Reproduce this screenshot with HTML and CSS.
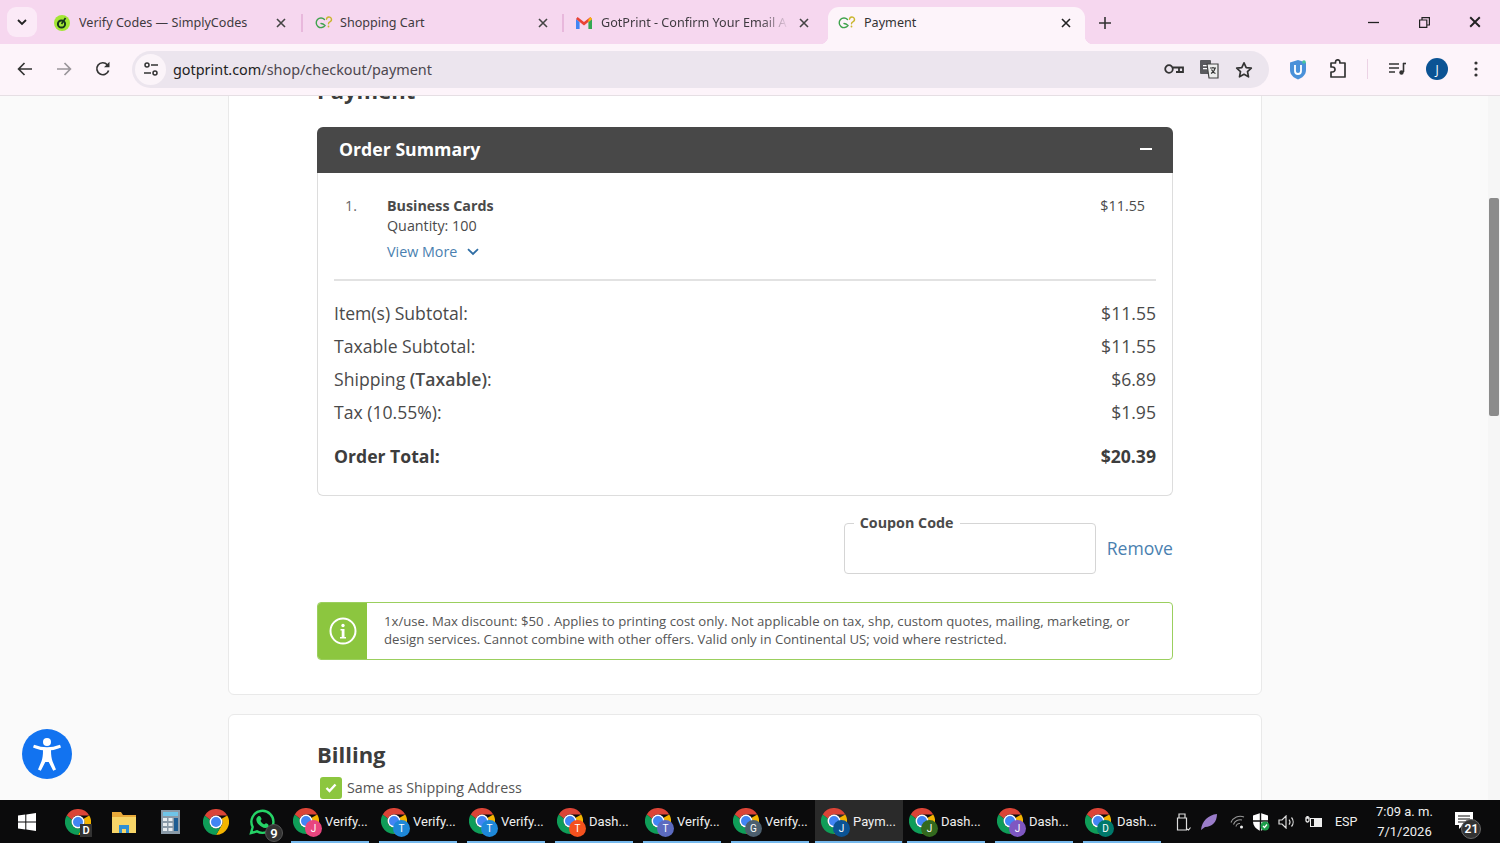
FILE: index.html
```html
<!DOCTYPE html>
<html lang="en">
<head>
<meta charset="utf-8">
<title>Payment</title>
<link rel="stylesheet" href="styles.css">
</head>
<body>
<svg class="defs" width="0" height="0" aria-hidden="true">
  <symbol id="chrome" viewBox="0 0 24 24">
    <path fill="#db4437" d="M1.6 6A12 12 0 0 1 22.4 6H12a6 6 0 0 0-5.6 3.9z"/>
    <path fill="#f4b400" d="M22.4 6A12 12 0 0 1 12 24l5.2-9a6 6 0 0 0 0-6z" />
    <path fill="#0f9d58" d="M1.6 6A12 12 0 0 0 12 24l5.2-9a6 6 0 0 1-10.8-5.1z"/>
    <circle cx="12" cy="12" r="6" fill="#fff"/>
    <circle cx="12" cy="12" r="4.6" fill="#4285f4"/>
  </symbol>
  <symbol id="gp" viewBox="0 0 18 14">
    <path fill="none" stroke="#3fa34d" stroke-width="1.4" stroke-linecap="round" d="M9.500 3.500A4.800 4.800 0 1 0 10 9.500C8.500 8 7.500 7.500 6 7.500"/>
    <path fill="none" stroke="#c9b52d" stroke-width="1.4" stroke-linecap="round" d="M11.500 3.200a2.500 2.500 0 1 1 3.400 2.600c-1 .5-1.400 1-1.400 2"/>
    <circle cx="13.500" cy="10.500" r=".9" fill="#c9b52d"/>
  </symbol>
  <symbol id="x" viewBox="0 0 10 10">
    <path fill="none" stroke="currentColor" stroke-width="1.6" d="M1 1l8 8M9 1l-8 8"/>
  </symbol>
</svg>

<header class="tabstrip">
  <div class="tab-search"><svg width="10" height="7" viewBox="0 0 10 7"><path fill="none" stroke="#222" stroke-width="1.8" d="M1 1l4 4 4-4"/></svg></div>
  <div class="tab tab-first">
    <svg class="favicon" width="16" height="16" viewBox="0 0 16 16"><circle cx="8" cy="8" r="8" fill="#a3e635"/><circle cx="7.5" cy="9" r="3.6" fill="none" stroke="#14361b" stroke-width="2"/><path fill="none" stroke="#14361b" stroke-width="1.6" d="M7.5 9l4-6"/></svg>
    <span class="tab-title">Verify Codes — SimplyCodes</span>
    <svg class="tab-x" width="10" height="10"><use href="#x"/></svg>
  </div>
  <i class="tab-sep"></i>
  <div class="tab tab-second">
    <svg class="favicon" width="18" height="14"><use href="#gp"/></svg>
    <span class="tab-title">Shopping Cart</span>
    <svg class="tab-x" width="10" height="10"><use href="#x"/></svg>
  </div>
  <i class="tab-sep"></i>
  <div class="tab">
    <svg class="favicon" width="16" height="12" viewBox="0 0 16 12"><path fill="#4285f4" d="M0 2v10h3.6V5z"/><path fill="#34a853" d="M16 2v10h-3.6V5z"/><path fill="#ea4335" d="M1.6 0 8 5l6.4-5L16 2l-8 6.4L0 2z"/><path fill="#fbbc04" d="M12.4 2.8 14.4 0 16 2l-3.600 3z"/></svg>
    <span class="tab-title tab-fade">GotPrint - Confirm Your Email A</span>
    <svg class="tab-x" width="10" height="10"><use href="#x"/></svg>
  </div>
  <div class="tab tab-active">
    <svg class="favicon" width="18" height="14"><use href="#gp"/></svg>
    <span class="tab-title">Payment</span>
    <svg class="tab-x" width="10" height="10"><use href="#x"/></svg>
  </div>
  <svg class="tab-new" width="12" height="12" viewBox="0 0 12 12"><path stroke="#333" stroke-width="1.6" d="M6 0v12M0 6h12"/></svg>
  <div class="win-controls">
    <svg width="11" height="11" viewBox="0 0 11 11"><path stroke="#222" stroke-width="1.3" d="M0 5.5h11"/></svg>
    <svg width="11" height="11" viewBox="0 0 11 11"><path fill="none" stroke="#222" stroke-width="1.2" d="M.6 3h7.2v7.4H.6zM3 3V.7h7.4V8H7.8"/></svg>
    <svg width="12" height="12"><use href="#x"/></svg>
  </div>
</header>

<nav class="toolbar">
  <svg class="tool" width="16" height="14" viewBox="0 0 16 14"><path fill="none" stroke="#333" stroke-width="1.7" d="M15 7H2M7.5 1 1.6 7l5.900 6"/></svg>
  <svg class="tool tool-fwd" width="16" height="14" viewBox="0 0 16 14"><path fill="none" stroke="#9a959a" stroke-width="1.7" d="M1 7h13M8.500 1l5.900 6-5.900 6"/></svg>
  <svg class="tool tool-reload" width="16" height="16" viewBox="0 0 16 16"><path fill="none" stroke="#333" stroke-width="1.7" d="M13.600 9.500A6 6 0 1 1 12.300 3.700"/><path fill="#333" d="M14.500 .8v5.500H9z"/></svg>
  <div class="omnibox">
    <div class="site-info"><svg width="16" height="16" viewBox="0 0 16 16"><g fill="none" stroke="#333" stroke-width="1.500"><circle cx="4" cy="4" r="2"/><circle cx="12" cy="12" r="2"/><path d="M8 4h7M1 12h7"/></g></svg></div>
    <span class="url">gotprint.com<span class="url-path">/shop/checkout/payment</span></span>
    <div class="omni-icons">
      <svg width="20" height="12" viewBox="0 0 20 12"><g fill="none" stroke="#333" stroke-width="1.800"><circle cx="5" cy="6" r="3.800"/><path d="M9 4.500h10v4.500h-7"/><path d="M15 5v3"/></g></svg>
      <svg width="19" height="19" viewBox="0 0 19 19"><rect x="0" y="0" width="11" height="14" rx="1" fill="#5a5a5e"/><path fill="#fff" d="M3 5h5v1.200H3zM3 8h5v1.200H3z"/><path fill="#eee" stroke="#444" stroke-width="1.200" d="M7 4h11v14H9z"/><path fill="none" stroke="#333" stroke-width="1.200" d="M10 8h6M13 7v1M15 8c-.5 3-2 4.500-4 5.500M11.500 9.500c1 2 2.500 3.500 4 4"/></svg>
      <svg width="18" height="17" viewBox="0 0 18 17"><path fill="none" stroke="#333" stroke-width="1.700" stroke-linejoin="round" d="m9 1.800 2.200 4.800 5.100.6-3.800 3.500 1 5.100L9 13.300l-4.500 2.500 1-5.100L1.700 7.200l5.100-.6z"/></svg>
    </div>
  </div>
  <div class="ext-icons">
    <svg width="18" height="21" viewBox="0 0 18 21"><path fill="#4a90d9" d="M1 3.500 9 1l8 2.500V11c0 5-4 8-8 9.500C5 19 1 16 1 11z"/><path fill="none" stroke="#fff" stroke-width="1.800" d="M6 6v6a3 3 0 0 0 6 0V6"/><circle cx="15" cy="3" r="1.800" fill="#43c59e"/></svg>
    <svg width="18" height="20" viewBox="0 0 18 20"><path fill="none" stroke="#333" stroke-width="1.700" stroke-linejoin="round" d="M2 4h4.500V3a2.200 2.200 0 0 1 4.400 0v1H16v14H2v-5h1.500a2.500 2.500 0 0 0 0-5H2z"/></svg>
    <i class="ext-sep"></i>
    <svg width="17" height="14" viewBox="0 0 17 14"><path stroke="#333" stroke-width="1.600" fill="none" d="M0 2h10M0 6h10M0 10h6M14.500 1v9"/><circle cx="12.500" cy="10.500" r="2.200" fill="#333"/><path stroke="#333" stroke-width="1.600" d="M14 1.500h3"/></svg>
    <span class="avatar">J</span>
    <svg class="kebab" width="4" height="16" viewBox="0 0 4 16"><g fill="#333"><circle cx="2" cy="2" r="1.600"/><circle cx="2" cy="8" r="1.600"/><circle cx="2" cy="14" r="1.600"/></g></svg>
  </div>
</nav>

<div class="viewport">
  <main class="page">
    <section class="card card-payment">
      <h1 class="heading">Payment</h1>
      <div class="summary">
        <div class="summary-head">
          <h2>Order Summary</h2>
          <span class="collapse"></span>
        </div>
        <div class="summary-body">
          <div class="item">
            <span class="item-no">1.</span>
            <div class="item-info">
              <strong>Business Cards</strong>
              <span>Quantity: 100</span>
              <a class="view-more">View More
                <svg width="12" height="8" viewBox="0 0 12 8"><path fill="none" stroke="#2f6ea5" stroke-width="1.800" d="M1 1.200 6 6l5-4.800"/></svg>
              </a>
            </div>
            <span class="item-price">$11.55</span>
          </div>
          <div class="totals">
            <div class="total-row"><span>Item(s) Subtotal:</span><span>$11.55</span></div>
            <div class="total-row"><span>Taxable Subtotal:</span><span>$11.55</span></div>
            <div class="total-row"><span>Shipping <b class="medium">(Taxable)</b>:</span><span>$6.89</span></div>
            <div class="total-row"><span>Tax (10.55%):</span><span>$1.95</span></div>
            <div class="total-row grand"><span>Order Total:</span><span>$20.39</span></div>
          </div>
        </div>
      </div>
      <div class="coupon-row">
        <fieldset class="coupon"><legend>Coupon Code</legend></fieldset>
        <a class="remove">Remove</a>
      </div>
      <div class="notice">
        <div class="notice-icon">
          <svg width="28" height="28" viewBox="0 0 28 28"><circle cx="14" cy="14" r="12.500" fill="none" stroke="#fff" stroke-width="2"/><circle cx="14" cy="8.500" r="1.700" fill="#fff"/><path fill="#fff" d="M11.500 12h4v8h1.500v1.600h-6V20h1.700v-6.400h-1.200z"/></svg>
        </div>
        <p>1x/use. Max discount: $50 . Applies to printing cost only. Not applicable on tax, shp, custom quotes, mailing, marketing, or design services. Cannot combine with other offers. Valid only in Continental US; void where restricted.</p>
      </div>
    </section>
    <section class="card card-billing">
      <h1 class="heading">Billing</h1>
      <label class="same">
        <span class="check"><svg width="12" height="10" viewBox="0 0 12 10"><path fill="none" stroke="#fff" stroke-width="2.400" d="m1.500 5 3 3 6-6.500"/></svg></span>
        <span>Same as Shipping Address</span>
      </label>
    </section>
  </main>
  <div class="scrollbar"><div class="thumb"></div></div>
  <div class="a11y">
    <svg width="34" height="38" viewBox="0 0 34 38"><g fill="#fff"><circle cx="17" cy="7" r="4"/><path d="M3 12.500l1-2.700c5 1.700 8.500 2.500 13 2.500s8-.8 13-2.500l1 2.700c-3.600 1.500-6.600 2.400-10 2.800 0 5 .5 8 1.500 11l3.500 8.200-2.800 1.200L18.700 27h-3.400l-4.500 8.700L8 34.500l3.500-8.200c1-3 1.500-6 1.500-11-3.400-.4-6.400-1.300-10-2.800z"/></g></svg>
  </div>
</div>

<footer class="taskbar">
  <svg class="win-logo" width="18" height="18" viewBox="0 0 18 18"><path fill="#fff" d="M0 2.600 7.300 1.600v7H0zM8.300 1.400 18 0v8.600H8.300zM0 9.600h7.300v7L0 15.500zM8.300 9.600H18V18l-9.700-1.400z"/></svg>
  <div class="pin">
    <svg width="26" height="26"><use href="#chrome"/></svg>
    <span class="badge badge-square">D</span>
  </div>
  <div class="pin">
    <svg width="24" height="22" viewBox="0 0 24 22"><path fill="#e8a93a" d="M0 1h9l2 3h13v18H0z"/><path fill="#f7d568" d="M0 6h24v16H0z"/><path fill="#2d8fd6" d="M7 14h10v8h-3v-4h-4v4H7z"/></svg>
  </div>
  <div class="pin">
    <svg width="19" height="24" viewBox="0 0 19 24"><rect width="19" height="24" fill="#8a9aa8"/><rect x="2" y="2" width="15" height="4" fill="#6fc4e8"/><g fill="#e8edf1"><rect x="2" y="8" width="4" height="3"/><rect x="7.500" y="8" width="4" height="3"/><rect x="2" y="13" width="4" height="3"/><rect x="7.500" y="13" width="4" height="3"/><rect x="2" y="18" width="4" height="3"/><rect x="7.500" y="18" width="4" height="3"/></g><rect x="13" y="8" width="4" height="13" fill="#1d5c93"/></svg>
  </div>
  <div class="pin">
    <svg width="26" height="26"><use href="#chrome"/></svg>
  </div>
  <div class="pin">
    <svg width="28" height="28" viewBox="0 0 28 28"><path fill="none" stroke="#25d366" stroke-width="2.400" d="M3 25l1.700-6A11 11 0 1 1 9 23.400z"/><path fill="#25d366" d="M10 8.500c2-1.500 3 1 3.500 2.300.3 1-1.300 1.500-.8 2.500.8 1.500 1.800 2.300 3.300 3 .9.300 1.200-1.300 2.200-1 1.300.6 3.300 1.500 2 3.500-2.400 2.500-7 .7-10-2.800-2.300-2.800-2.500-6 -.2-7.500z"/></svg>
    <span class="badge badge-num">9</span>
  </div>
  <div class="tasks">
    <div class="task"><span class="task-icon"><svg width="26" height="26"><use href="#chrome"/></svg><b class="profile p-pink">J</b></span><span class="task-label">Verify...</span></div>
    <div class="task"><span class="task-icon"><svg width="26" height="26"><use href="#chrome"/></svg><b class="profile p-blue">T</b></span><span class="task-label">Verify...</span></div>
    <div class="task"><span class="task-icon"><svg width="26" height="26"><use href="#chrome"/></svg><b class="profile p-blue">T</b></span><span class="task-label">Verify...</span></div>
    <div class="task"><span class="task-icon"><svg width="26" height="26"><use href="#chrome"/></svg><b class="profile p-orange">T</b></span><span class="task-label">Dash...</span></div>
    <div class="task"><span class="task-icon"><svg width="26" height="26"><use href="#chrome"/></svg><b class="profile p-indigo">T</b></span><span class="task-label">Verify...</span></div>
    <div class="task"><span class="task-icon"><svg width="26" height="26"><use href="#chrome"/></svg><b class="profile p-slate">G</b></span><span class="task-label">Verify...</span></div>
    <div class="task task-active"><span class="task-icon"><svg width="26" height="26"><use href="#chrome"/></svg><b class="profile p-navy">J</b></span><span class="task-label">Paym...</span></div>
    <div class="task"><span class="task-icon"><svg width="26" height="26"><use href="#chrome"/></svg><b class="profile p-green">J</b></span><span class="task-label">Dash...</span></div>
    <div class="task"><span class="task-icon"><svg width="26" height="26"><use href="#chrome"/></svg><b class="profile p-purple">J</b></span><span class="task-label">Dash...</span></div>
    <div class="task"><span class="task-icon"><svg width="26" height="26"><use href="#chrome"/></svg><b class="profile p-teal">D</b></span><span class="task-label">Dash...</span></div>
  </div>
  <div class="tray">
    <svg width="15" height="18" viewBox="0 0 15 18"><path fill="none" stroke="#ddd" stroke-width="1.200" d="M3 1h6v4H3zM1.500 5h9v12h-9zM11 16l1.500 1 2-2.500"/></svg>
    <svg width="18" height="18" viewBox="0 0 18 18"><path fill="#9a7cc9" d="M1 17C2 8 8 2 17 1c0 8-5 13-12 13z"/></svg>
    <svg class="tray-wifi" width="16" height="14" viewBox="0 0 16 14"><g fill="none" stroke="#999" stroke-width="1.100"><path d="M1 7.500A10 10 0 0 1 14 2"/><path d="M3.500 9.500A7 7 0 0 1 12 5"/><path d="M6 11.500A3.500 3.500 0 0 1 10 8.500"/></g><circle cx="11.500" cy="12" r="1.500" fill="#eee"/></svg>
    <svg class="tray-shield" width="18" height="18" viewBox="0 0 18 18"><path fill="#fff" d="M8.500 0 16 2.500V8c0 5-3 8-7.500 10C4 16 1 13 1 8V2.500z"/><path stroke="#111" stroke-width="1.400" d="M8.500 0v18M1 8h15"/><circle cx="13" cy="13" r="4.500" fill="#1d9e4a"/><path fill="none" stroke="#fff" stroke-width="1.300" d="m11 13 1.500 1.500 2.500-3"/></svg>
    <svg width="18" height="14" viewBox="0 0 18 14"><path fill="none" stroke="#ddd" stroke-width="1.200" d="M1 5v4h3l4 4V1L4 5zM11 4.500a4 4 0 0 1 0 5M13.500 2.500a7 7 0 0 1 0 9"/></svg>
    <svg width="18" height="14" viewBox="0 0 18 14"><rect x="5" y="3" width="12" height="9" fill="#eee"/><rect x="6" y="4" width="3" height="7" fill="#111"/><path fill="none" stroke="#eee" stroke-width="1.300" d="M1 3h3v2.500a1.500 1.500 0 0 1-3 0zM2 1v2M3 1v2"/></svg>
    <span class="tray-lang">ESP</span>
    <div class="clock"><span>7:09 a. m.</span><span>7/1/2026</span></div>
    <div class="notif">
      <svg width="18" height="18" viewBox="0 0 18 18"><path fill="#fff" d="M0 0h18v13H8l-4 4v-4H0z"/><path stroke="#111" stroke-width="1.200" d="M3 4h12M3 7h12M3 10h8"/></svg>
      <span class="badge badge-notif">21</span>
    </div>
  </div>
</footer>
</body>
</html>
```

FILE: styles.css
```css
* { box-sizing: border-box; }
html, body { margin: 0; height: 100%; }
body {
  width: 1500px;
  height: 843px;
  overflow: hidden;
  display: flex;
  flex-direction: column;
  font-family: "Open Sans", sans-serif;
  color: #4a4a4a;
  background: #fafafa;
}
.defs { position: absolute; }

/* Tab strip */
.tabstrip {
  height: 44px;
  flex: none;
  background: #f6d7ef;
  display: flex;
  align-items: flex-end;
  padding-left: 7px;
  font-family: "Noto Sans", sans-serif;
  font-size: 12.6px;
  color: #3f3a40;
}
.tab-search {
  width: 30px;
  height: 30px;
  margin: 0 0 7px;
  border-radius: 9px;
  background: #fbeaf7;
  display: flex;
  align-items: center;
  justify-content: center;
}
.tab {
  width: 260px;
  height: 37px;
  display: flex;
  align-items: center;
  padding: 0 15px 6px 12px;
  flex: none;
}
.tab-first { width: 264px; padding-left: 17px; padding-right: 15px; }
.tab-second { width: 259px; padding-right: 14px; }
.tab-second .favicon { margin-right: 7px; }
.favicon { flex: none; margin-right: 9px; }
.tab-title { flex: 1; white-space: nowrap; overflow: hidden; }
.tab-fade {
  -webkit-mask-image: linear-gradient(90deg, #000 85%, transparent);
  mask-image: linear-gradient(90deg, #000 85%, transparent);
}
.tab-x { flex: none; margin-left: 10px; color: #444; }
.tab-sep {
  width: 2px;
  height: 18px;
  background: #e8b8dc;
  margin-bottom: 12px;
  flex: none;
}
.tab-active {
  width: 257px;
  margin-left: 4px;
  background: #fdf4fa;
  border-radius: 11px 11px 0 0;
  padding-left: 10px;
  padding-right: 14px;
  color: #333;
  position: relative;
}
.tab-active .favicon { margin-right: 8px; }
.tab-active::before,
.tab-active::after {
  content: "";
  position: absolute;
  bottom: 0;
  width: 8px;
  height: 8px;
}
.tab-active::before {
  left: -8px;
  background: radial-gradient(circle at 0 0, transparent 8px, #fdf4fa 8.5px);
}
.tab-active::after {
  right: -8px;
  background: radial-gradient(circle at 100% 0, transparent 8px, #fdf4fa 8.5px);
}
.tab-active .tab-x { color: #222; }
.tab-new { margin: 0 0 15px 14px; flex: none; }
.win-controls {
  margin-left: auto;
  width: 152px;
  display: flex;
  align-items: center;
  justify-content: space-between;
  padding: 0 19px 0 20px;
  height: 44px;
  color: #222;
}

/* Toolbar */
.toolbar {
  height: 52px;
  flex: none;
  background: #fdf4fa;
  border-bottom: 1px solid #e6dfe4;
  display: flex;
  align-items: center;
  padding: 0 0 1px 17px;
}
.tool { flex: none; }
.tool-fwd { margin-left: 23px; }
.tool-reload { margin-left: 23px; }
.omnibox {
  width: 1137px;
  height: 37px;
  margin-left: 21px;
  border-radius: 19px;
  background: #ece5ee;
  display: flex;
  align-items: center;
  padding-left: 3px;
}
.site-info {
  width: 31px;
  height: 31px;
  border-radius: 50%;
  background: #fbf4f9;
  display: flex;
  align-items: center;
  justify-content: center;
}
.url { margin-left: 7px; font-family: "Noto Sans", sans-serif; font-size: 14.4px; color: #222; }
.url-path { color: #4c474e; }
.omni-icons {
  margin-left: auto;
  display: flex;
  align-items: center;
  gap: 16px;
  padding-right: 16px;
}
.ext-icons {
  display: flex;
  align-items: center;
  margin-left: 20px;
  flex: 1;
  gap: 22px;
}
.ext-sep { width: 1px; height: 20px; background: #ecd3e5; margin: 0 -1px 0 -2px; }
.avatar {
  width: 22px;
  height: 22px;
  border-radius: 50%;
  background: #0b5394;
  color: #fff;
  font-size: 12px;
  display: flex;
  align-items: center;
  justify-content: center;
  margin-left: -2px;
}
.kebab { margin-left: 4px; }

/* Page */
.viewport {
  flex: 1;
  min-height: 0;
  position: relative;
  display: flex;
  overflow: hidden;
  background: #fafafa;
}
.page {
  flex: 1;
  padding-left: 228px;
  margin-top: -73px;
}
.scrollbar {
  width: 12px;
  flex: none;
  background: #f6f6f6;
  padding-top: 102px;
}
.thumb { height: 218px; background: #8b8b8b; border-radius: 2px; margin: 0 1px; }
.card {
  width: 1034px;
  background: #fff;
  border: 1px solid #e9e9e9;
  border-radius: 6px;
  padding: 0 88px;
}
.card-payment { height: 672px; padding-top: 51px; }
.card-billing { margin-top: 19px; padding-top: 24px; height: 200px; }
.heading {
  margin: 0;
  font-size: 22px;
  line-height: 30px;
  font-weight: 700;
  color: #3d3d3d;
}
.summary { margin-top: 22px; }
.summary-head {
  height: 46px;
  background: #484848;
  border-radius: 6px 6px 0 0;
  color: #fff;
  display: flex;
  align-items: center;
  justify-content: space-between;
  padding: 0 21px 2px 22px;
}
.summary-head h2 { margin: 0; font-size: 17.7px; font-weight: 700; }
.collapse { width: 12px; height: 2px; background: #fff; }
.summary-body {
  height: 323px;
  border: 1px solid #ddd;
  border-top: 0;
  border-radius: 0 0 6px 6px;
  padding: 0 16px;
}
.item {
  height: 108px;
  border-bottom: 2px solid #e2e2e2;
  display: flex;
  padding: 23px 11px 0 11px;
  font-size: 14.3px;
  line-height: 20px;
}
.item-no { width: 42px; color: #666; flex: none; }
.item-info { flex: 1; display: flex; flex-direction: column; }
.view-more {
  margin-top: 6px;
  color: #4a7fb0;
  display: flex;
  align-items: center;
  gap: 10px;
}
.totals { padding-top: 15px; }
.total-row {
  height: 33px;
  display: flex;
  align-items: center;
  justify-content: space-between;
  font-size: 17.6px;
}
.medium { font-weight: 600; }
.grand { margin-top: 11px; font-weight: 700; color: #3d3d3d; height: 34px; }
.coupon-row {
  display: flex;
  justify-content: flex-end;
  align-items: flex-end;
  gap: 11px;
  margin-top: 19px;
}
.coupon {
  width: 252px;
  height: 59px;
  margin: 0;
  padding: 0 9px;
  border: 1px solid #d5d5d5;
  border-radius: 4px;
}
.coupon legend {
  padding: 0 6px;
  font-size: 14.3px;
  line-height: 16px;
  font-weight: 700;
  color: #4a4a4a;
}
.remove { font-size: 17.6px; line-height: 52px; color: #4a7fb0; }
.notice {
  margin-top: 28px;
  height: 58px;
  border: 1px solid #9bcf5e;
  border-radius: 4px;
  display: flex;
  overflow: hidden;
}
.notice-icon {
  width: 49px;
  flex: none;
  background: #8cc63f;
  display: flex;
  align-items: center;
  justify-content: center;
}
.notice p {
  margin: 0;
  align-self: center;
  padding: 0 30px 2px 17px;
  font-size: 13.18px;
  line-height: 18px;
  color: #555;
}
.same {
  display: flex;
  align-items: flex-start;
  gap: 5px;
  margin: 8px 0 0 3px;
  font-size: 14.3px;
  line-height: 22px;
  color: #555;
}
.check {
  width: 22px;
  height: 22px;
  border-radius: 3px;
  background: #8cc63f;
  display: flex;
  align-items: center;
  justify-content: center;
}
.a11y {
  position: absolute;
  left: 22px;
  top: 633px;
  width: 50px;
  height: 50px;
  border-radius: 50%;
  background: #1273f0;
  display: flex;
  align-items: center;
  justify-content: center;
}

/* Taskbar */
.taskbar {
  height: 43px;
  flex: none;
  background: #0b0b0c;
  display: flex;
  align-items: center;
  color: #f0f0f0;
  font-family: Roboto, sans-serif;
  font-size: 13px;
}
.win-logo { margin-left: 18px; margin-right: 19px; flex: none; }
.pin {
  width: 46px;
  height: 43px;
  flex: none;
  position: relative;
  display: flex;
  align-items: center;
  justify-content: center;
}
.badge {
  position: absolute;
  color: #fff;
  font-size: 11px;
  font-weight: 600;
  display: flex;
  align-items: center;
  justify-content: center;
}
.badge-square { right: 9px; bottom: 6px; width: 12px; height: 13px; background: #333; }
.badge-num {
  right: 2px; bottom: 1px; width: 18px; height: 18px;
  border-radius: 50%; background: #333; border: 1px solid #555; font-size: 13px;
}
.tasks { display: flex; flex: none; margin-left: 2px; }
.task {
  width: 88px;
  height: 43px;
  flex: none;
  display: flex;
  align-items: center;
  padding-left: 6px;
  position: relative;
  gap: 6px;
}
.task::after {
  content: "";
  position: absolute;
  left: 4px;
  right: 6px;
  bottom: 0;
  height: 2px;
  background: #76b9ed;
}
.task-active { background: #2a2a2a; }
.task-active::after { left: 0; right: 1px; }
.task-icon { position: relative; width: 26px; height: 26px; flex: none; top: -1px; }
.task-icon svg { display: block; }
.profile {
  position: absolute;
  right: -3px;
  bottom: -3px;
  width: 17px;
  height: 17px;
  border-radius: 50%;
  color: #fff;
  font-size: 10px;
  font-weight: 400;
  display: flex;
  align-items: center;
  justify-content: center;
}
.task-label { font-size: 13px; white-space: nowrap; margin-top: -1px; }
.p-pink { background: #e8457e; }
.p-blue { background: #1e88d8; }
.p-orange { background: #f4511e; }
.p-indigo { background: #5c6bc0; }
.p-slate { background: #4c5f6e; }
.p-navy { background: #0b5394; }
.p-green { background: #33691e; }
.p-purple { background: #7e57c2; }
.p-teal { background: #00796b; }
.tray {
  flex: 1;
  display: flex;
  align-items: center;
  padding-left: 9px;
  gap: 9px;
  height: 43px;
}
.tray-wifi { margin: 0 -3px 0 3px; }
.tray-shield { margin-right: -1px; }
.tray-lang { font-size: 12.5px; margin-left: 3px; }
.clock {
  display: flex;
  flex-direction: column;
  align-items: center;
  font-size: 13px;
  line-height: 20px;
  margin-left: 8px;
  width: 60px;
}
.notif { position: relative; margin-left: 12px; display: flex; top: -1px; }
.badge-notif {
  right: -8px; bottom: -9px; width: 20px; height: 20px;
  border-radius: 50%; background: #333; border: 1px solid #666; font-size: 12px;
}
```
